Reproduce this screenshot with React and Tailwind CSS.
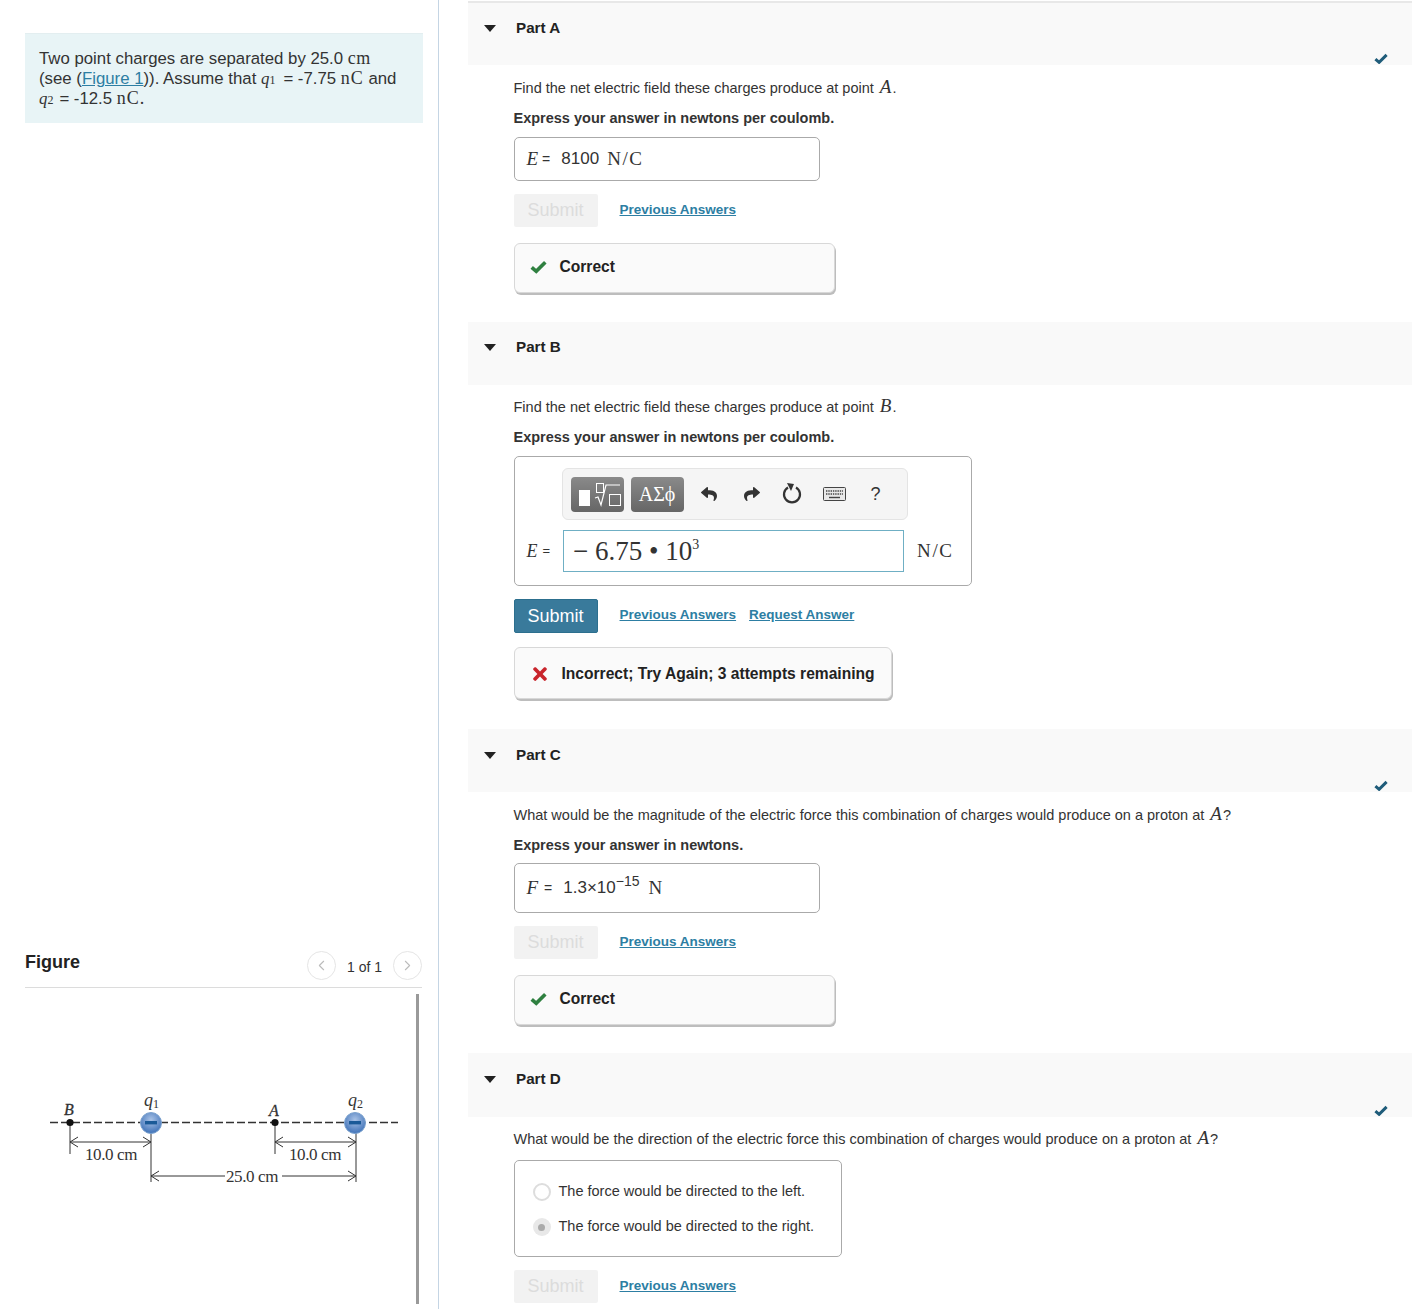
import { FaTimes, FaReply, FaShare } from 'react-icons/fa'
import { ChevronLeft, ChevronRight } from 'lucide-react'

const sans = 'font-["Liberation_Sans",Arial,sans-serif]'
const math = 'font-["Liberation_Serif",serif]'

function Check({ color, size = 14 }) {
  return (
    <svg width={size} height={size * 0.8} viewBox="0 0 15 12" className="block">
      <path d="M1.5 6.5l4 3.5 8-8" fill="none" stroke={color} strokeWidth="3.2" />
    </svg>
  )
}

function PartHeader({ label, checked, top, short, low }) {
  return (
    <div className={`flex justify-between ${short ? 'h-[63px]' : 'h-[64px]'} bg-[#f9f9f9] ${top ? 'mt-[1px] border-t-2 border-[#e8e8e8]' : ''}`}>
      <div className={`flex items-center ${low ? 'h-[53px]' : 'h-[51px]'} pl-[16px]`}>
        <svg width="12" height="7" viewBox="0 0 12 7" className="mr-[20px]">
          <path d="M0 0h12L6 7z" fill="#222" />
        </svg>
        <span className="text-[15.2px] font-bold text-[#222]">{label}</span>
      </div>
      {checked && (
        <div className="self-end pr-[24px] -translate-y-[1px]">
          <Check color="#1f5c7a" size={14} />
        </div>
      )}
    </div>
  )
}

function Question({ children }) {
  return <p className="text-[14.5px] leading-[20px] text-[#333]">{children}</p>
}

function Express({ children }) {
  return <p className="text-[14.5px] leading-[20px] font-bold text-[#333] mt-[10px]">{children}</p>
}

function PointLetter({ children }) {
  return <span className={`${math} italic text-[19px] ml-[2px] tracking-[1px]`}>{children}</span>
}

function AnswerLink({ children, className = '' }) {
  return <a className={`text-[13.5px] font-bold text-[#2d7ea3] underline ${className}`}>{children}</a>
}

function SubmitRow({ active, extra, className = '' }) {
  return (
    <div className={`flex items-center ${className}`}>
      {active ? (
        <button className="w-[84px] h-[34px] rounded-[2px] border border-[#2c6f8e] bg-[#397a9b] text-white text-[18px]">Submit</button>
      ) : (
        <button className="w-[84px] h-[33px] rounded-[2px] bg-[#f2f2f2] text-[#dcdcdc] text-[18px]">Submit</button>
      )}
      <AnswerLink className={`ml-[22px] ${active ? '-mt-[2px]' : ''}`}>Previous Answers</AnswerLink>
      {extra && <AnswerLink className="ml-[13px] -mt-[2px]">{extra}</AnswerLink>}
    </div>
  )
}

function Feedback({ correct, wide, className = '' }) {
  return (
    <div
      className={`flex items-center rounded-[6px] border border-[#d8d8d8] bg-[#fafafa] shadow-[1px_2px_0_#bdbdbd] ${wide ? 'w-[378px] h-[52px] pt-[2px]' : 'w-[321px] h-[50px] pb-[2px]'} ${className}`}
    >
      <span className="ml-[15px]">
        {correct ? <Check color="#2f8040" size={17} /> : <FaTimes className="text-[#c9252c] text-[20px] block" />}
      </span>
      <span className={`${correct ? 'ml-[13px]' : 'ml-[12px]'} text-[15.6px] font-bold text-[#222]`}>
        {correct ? 'Correct' : 'Incorrect; Try Again; 3 attempts remaining'}
      </span>
    </div>
  )
}

function Figure() {
  const lineColor = '#333'
  return (
    <svg width="390" height="310" viewBox="25 995 390 310">
      <defs>
        <radialGradient id="charge" cx="50%" cy="35%" r="65%">
          <stop offset="0%" stopColor="#a9c2e6" />
          <stop offset="100%" stopColor="#3f72b8" />
        </radialGradient>
      </defs>
      <line x1="50" y1="1123.5" x2="398" y2="1123.5" stroke="#333" strokeWidth="1.4" strokeDasharray="8 3" />
      <g stroke={lineColor} strokeWidth="1" fill="none">
        <path d="M70 1123V1155M151 1124V1183M275 1123V1155M356 1124V1183" />
        <path d="M70 1143H151M78 1138L70 1143L78 1148M143 1138L151 1143L143 1148" />
        <path d="M275 1143H356M283 1138L275 1143L283 1148M348 1138L356 1143L348 1148" />
        <path d="M151 1177H225M282 1177H356M159 1172L151 1177L159 1182M348 1172L356 1177L348 1182" />
      </g>
      <circle cx="70" cy="1123.5" r="3.6" fill="#111" />
      <circle cx="275" cy="1123.5" r="3.6" fill="#111" />
      <circle cx="151" cy="1124" r="10.5" fill="url(#charge)" stroke="#7da3cf" />
      <circle cx="355" cy="1124" r="10.5" fill="url(#charge)" stroke="#7da3cf" />
      <rect x="145" y="1122" width="12" height="3.4" fill="#1a5a98" />
      <rect x="349" y="1122" width="12" height="3.4" fill="#1a5a98" />
      <g fontFamily="Liberation Serif, serif" fill="#333">
        <text x="69" y="1116" fontSize="16" fontStyle="italic" textAnchor="middle" stroke="#333" strokeWidth="0.3">B</text>
        <text x="274" y="1117" fontSize="16" fontStyle="italic" textAnchor="middle" stroke="#333" strokeWidth="0.3">A</text>
        <text x="144" y="1107" fontSize="18" fontStyle="italic">q</text>
        <text x="153" y="1109" fontSize="12">1</text>
        <text x="348" y="1107" fontSize="18" fontStyle="italic">q</text>
        <text x="357" y="1109" fontSize="12">2</text>
        <text x="85" y="1161" fontSize="17" letterSpacing="-0.4">10.0 cm</text>
        <text x="289" y="1161" fontSize="17" letterSpacing="-0.4">10.0 cm</text>
        <text x="226" y="1183" fontSize="17" letterSpacing="-0.4">25.0 cm</text>
      </g>
    </svg>
  )
}

function Toolbar() {
  return (
    <div className="flex items-center w-[346px] h-[52px] ml-[47px] rounded-[6px] border border-[#e4e4e4] bg-[#f5f5f5]">
      <div className="ml-[8px] w-[53px] h-[35px] rounded-[4px] bg-gradient-to-b from-[#8a8a8a] to-[#666]">
        <svg width="53" height="35" viewBox="0 0 53 35" className="block">
          <rect x="8" y="13" width="11" height="16" fill="#fff" />
          <rect x="25.5" y="6.5" width="7" height="9" fill="none" stroke="#fff" />
          <path d="M24 21l3-1 3 8 5-20h14" fill="none" stroke="#fff" strokeWidth="1.2" />
          <rect x="38.5" y="17.5" width="11" height="11" fill="none" stroke="#fff" />
        </svg>
      </div>
      <div className={`${math} flex items-center justify-center ml-[7px] w-[53px] h-[35px] rounded-[4px] bg-gradient-to-b from-[#8a8a8a] to-[#666] text-white text-[20px]`}>
        ΑΣϕ
      </div>
      <FaReply className="ml-[17px] text-[#333] text-[16px]" />
      <FaShare className="ml-[27px] text-[#333] text-[16px]" />
      <svg width="22" height="24" viewBox="0 0 22 24" className="ml-[21px]">
        <path d="M15 5.5a8 8 0 1 1-8 0" fill="none" stroke="#333" strokeWidth="2.2" />
        <path d="M6 1l7 1-3 7z" fill="#333" />
      </svg>
      <svg width="23" height="14" viewBox="0 0 23 14" className="ml-[20px]">
        <rect x="0.5" y="0.5" width="22" height="13" rx="1" fill="#e8e8e8" stroke="#444" />
        <path d="M3 4h17M3 7h17" stroke="#444" strokeWidth="1.6" strokeDasharray="1.4 0.9" />
        <path d="M6 10.5h11" stroke="#444" strokeWidth="1.4" />
      </svg>
      <span className="ml-[25px] text-[18px] text-[#333]">?</span>
    </div>
  )
}

export default function App() {
  return (
    <div className={`${sans} flex h-[1309px] w-[1420px] overflow-hidden bg-white`}>
      {/* Left column */}
      <div className="flex flex-col w-[439px] shrink-0 border-r border-[#c5d5e4] pl-[25px] pt-[33px]">
        <div className="w-[398px] h-[90px] border-t border-[#e3eef0] bg-[#e8f4f6] pl-[14px] pt-[15px] text-[16.8px] leading-[20px] text-[#333]">
          <p>
            Two point charges are separated by 25.0 <span className={`${math} text-[18px] leading-none tracking-[0.6px]`}>cm</span>
          </p>
          <p>
            (see (<a className="text-[#2d7ea3] underline">Figure 1</a>)). Assume that{' '}
            <span className={`${math} italic`}>q</span>
            <span className={`${math} text-[12px] leading-none`}>1</span>
            <span className="ml-[8px]">= -7.75 </span>
            <span className={`${math} text-[18px] leading-none tracking-[1px]`}>nC</span> and
          </p>
          <p>
            <span className={`${math} italic`}>q</span>
            <span className={`${math} text-[12px] leading-none`}>2</span>
            <span className="ml-[6px]">= -12.5 </span>
            <span className={`${math} text-[18px] leading-none tracking-[1px]`}>nC.</span>
          </p>
        </div>

        <div className="flex items-center justify-between w-[397px] h-[37px] mt-[828px] border-b border-[#dcdcdc] pb-[8px]">
          <span className="text-[18px] font-bold text-[#222] -mt-[6px]">Figure</span>
          <div className="flex items-center text-[14px] text-[#333]">
            <span className="flex items-center justify-center w-[29px] h-[29px] rounded-full border border-[#e5e5e5] text-[#bbb]">
              <ChevronLeft size={17} strokeWidth={1.5} />
            </span>
            <span className="mx-[11px] mt-[5px]">1 of 1</span>
            <span className="flex items-center justify-center w-[29px] h-[29px] rounded-full border border-[#e5e5e5] text-[#bbb]">
              <ChevronRight size={17} strokeWidth={1.5} />
            </span>
          </div>
        </div>
        <div className="flex w-[394px] h-[310px] mt-[6px] border-r-[3px] border-[#9a9a9a]">
          <Figure />
        </div>
      </div>

      {/* Right column */}
      <div className="w-[944px] ml-[29px] shrink-0">
        <PartHeader label="Part A" checked top />
        <div className="pl-[45.5px] pt-[12px] h-[257px]">
          <Question>
            Find the net electric field these charges produce at point <PointLetter>A</PointLetter>.
          </Question>
          <Express>Express your answer in newtons per coulomb.</Express>
          <div className="flex items-center w-[306px] h-[44px] mt-[9px] rounded-[5px] border border-[#aaa] pl-[12px] text-[#333]">
            <span className={`${math} italic text-[19px]`}>E</span>
            <span className="ml-[4px] text-[14px]">=</span>
            <span className="ml-[11px] text-[17px]">8100</span>
            <span className={`${math} ml-[8px] text-[19px] tracking-[1.6px]`}>N/C</span>
          </div>
          <SubmitRow className="mt-[13px]" />
          <Feedback correct className="mt-[16px]" />
        </div>

        <PartHeader label="Part B" short />
        <div className="pl-[45.5px] pt-[11px] h-[344px]">
          <Question>
            Find the net electric field these charges produce at point <PointLetter>B</PointLetter>.
          </Question>
          <Express>Express your answer in newtons per coulomb.</Express>
          <div className="w-[458px] h-[130px] mt-[9px] rounded-[5px] border border-[#aaa] pt-[11px] text-[#333]">
            <Toolbar />
            <div className="flex items-center mt-[10px] pl-[12px]">
              <span className={`${math} italic text-[18px]`}>E</span>
              <span className="ml-[5px] text-[13px]">=</span>
              <div className={`${math} flex items-center ml-[13px] w-[341px] h-[42px] border border-[#6fafc4] pl-[9px] text-[27px] text-[#333]`}>
                <span>
                  − 6.75 • 10<sup className="text-[14px] top-[-0.75em]">3</sup>
                </span>
              </div>
              <span className={`${math} ml-[13px] text-[19px] tracking-[1.6px]`}>N/C</span>
            </div>
          </div>
          <SubmitRow active extra="Request Answer" className="mt-[13px]" />
          <Feedback correct={false} wide className="mt-[14px]" />
        </div>

        <PartHeader label="Part C" checked short low />
        <div className="pl-[45.5px] pt-[12px] h-[261px]">
          <Question>
            What would be the magnitude of the electric force this combination of charges would produce on a proton at <PointLetter>A</PointLetter>?
          </Question>
          <Express>Express your answer in newtons.</Express>
          <div className="flex items-center w-[306px] h-[50px] mt-[8px] rounded-[5px] border border-[#aaa] pl-[12px] text-[#333]">
            <span className={`${math} italic text-[19px]`}>F</span>
            <span className="ml-[6px] text-[14px]">=</span>
            <span className="ml-[11px] text-[17px]">
              1.3×10<sup className="text-[14px]">−15</sup>
            </span>
            <span className={`${math} ml-[9px] text-[19px]`}>N</span>
          </div>
          <SubmitRow className="mt-[13px]" />
          <Feedback correct className="mt-[16px]" />
        </div>

        <PartHeader label="Part D" checked low />
        <div className="pl-[45.5px] pt-[11px]">
          <Question>
            What would be the direction of the electric force this combination of charges would produce on a proton at <PointLetter>A</PointLetter>?
          </Question>
          <div className="w-[328px] h-[97px] mt-[11px] rounded-[5px] border border-[#aaa] pl-[18px] pt-[21px] text-[14.5px] text-[#333]">
            <div className="flex items-center h-[20px]">
              <span className="w-[18px] h-[18px] rounded-full border-2 border-[#ddd] bg-white" />
              <span className="ml-[8px]">The force would be directed to the left.</span>
            </div>
            <div className="flex items-center h-[20px] mt-[15px]">
              <span className="flex items-center justify-center w-[18px] h-[18px] rounded-full bg-[#e8e8e8]">
                <span className="w-[7px] h-[7px] rounded-full bg-[#aaa]" />
              </span>
              <span className="ml-[8px]">The force would be directed to the right.</span>
            </div>
          </div>
          <SubmitRow className="mt-[13px]" />
        </div>
      </div>
    </div>
  )
}
